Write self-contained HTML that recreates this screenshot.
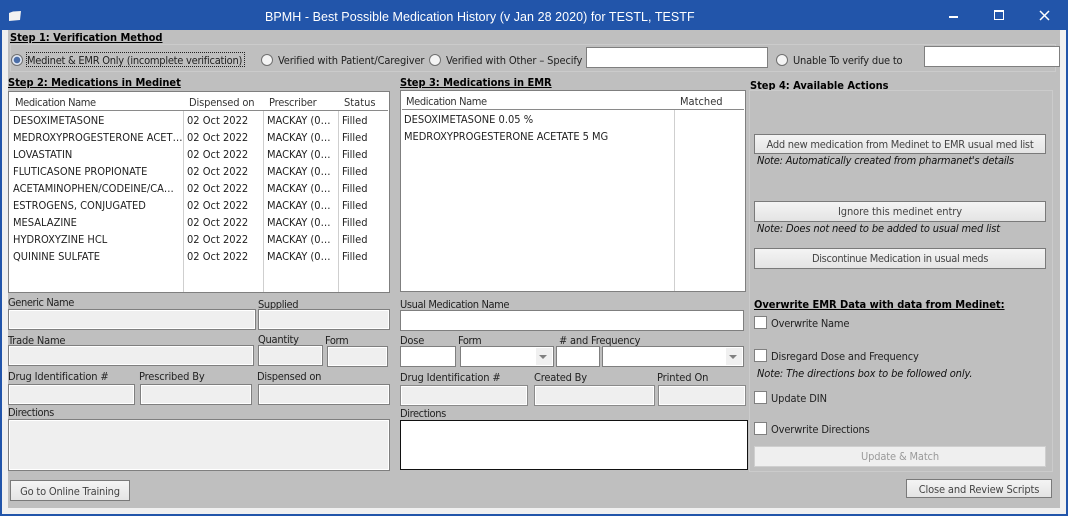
<!DOCTYPE html>
<html><head><meta charset="utf-8"><style>
html,body{margin:0;padding:0}
body{width:1068px;height:516px;overflow:hidden;position:relative;background:#f0f0f0;font:11px/14px "DejaVu Sans Condensed","Liberation Sans",sans-serif;color:#111}
div,span.t{position:absolute;box-sizing:border-box;white-space:nowrap}
.t{font-family:"DejaVu Sans Condensed","Liberation Sans",sans-serif;font-stretch:condensed;font-size:11px;line-height:14px;color:#222;margin-top:1px}
.h{color:#333}
.b{font-weight:bold;color:#000;margin-top:1px;letter-spacing:-.03px}
.u{text-decoration:underline}
.i{font-style:italic;color:#111}
.f{border:1px solid #7f7f7f;background:#efefef;box-shadow:inset 0 0 0 1px #fff}
.w{border:1px solid #7f7f7f;background:#fff}
.d{border:1px solid #8a8a8a;background:#efefef;box-shadow:inset 0 0 0 1px #fff}
.btn{border:1px solid #7a7a7a;background:linear-gradient(#f4f4f4,#e4e4e4);text-align:center;font-family:"DejaVu Sans Condensed","Liberation Sans",sans-serif;font-stretch:condensed;font-size:11px;line-height:20px;color:#444}
.s{background:#cfcfcf}
.c{width:13px;height:13px;border:1px solid #808080;background:#fff;left:754px}
.r{width:12px;height:12px;border:1px solid #707070;border-radius:50%;background:#f4f4f4}
</style></head><body>
<div style="left:0;top:0;width:1068px;height:30px;background:#2255aa"></div>
<div style="left:0;top:0;width:2px;height:516px;background:#2255aa"></div>
<div style="left:1066px;top:0;width:2px;height:516px;background:#2255aa"></div>
<div style="left:0;top:514px;width:1068px;height:2px;background:#2255aa"></div>
<div style="left:8px;top:30px;width:1052px;height:478px;background:#bfbfbf"></div>
<svg style="position:absolute;left:8px;top:10px" width="14" height="12"><path d="M1 3 L5 1.5 L13 1 L12 10 L1 11 Z" fill="#f2f2f2"/></svg>
<span class="t" style="left:265px;top:8px;font-family:'Liberation Sans',sans-serif;font-stretch:normal;font-size:12.5px;line-height:16px;color:#fff;letter-spacing:.05px">BPMH - Best Possible Medication History (v Jan 28 2020) for TESTL, TESTF</span>
<div style="left:949px;top:16px;width:9px;height:2px;background:#fff"></div>
<div style="left:994px;top:10px;width:10px;height:10px;border:1px solid #fff;border-top-width:2px"></div>
<svg style="position:absolute;left:1038px;top:9px" width="13" height="13"><path d="M2 2 L11 11 M11 2 L2 11" stroke="#fff" stroke-width="1.5"/></svg>

<span class="t b u" style="left:10px;top:30px">Step 1: Verification Method</span>
<div style="left:10px;top:44px;width:1046px;height:28px;border:1px solid #cbcbcb"></div>
<div class="r" style="left:11px;top:54px;background:radial-gradient(circle,#4b6ea8 0 3px,#dfe6f2 3.5px)"></div>
<div style="left:26px;top:52px;width:219px;height:15px;border:1px dotted #222"></div>
<span class="t" style="left:27px;top:53px;letter-spacing:-.25px">Medinet &amp; EMR Only (incomplete verification)</span>
<div class="r" style="left:261px;top:54px"></div>
<span class="t" style="left:278px;top:53px;letter-spacing:-.13px">Verified with Patient/Caregiver</span>
<div class="r" style="left:429px;top:54px"></div>
<span class="t" style="left:446px;top:53px;letter-spacing:-.13px">Verified with Other – Specify</span>
<div class="w" style="left:586px;top:47px;width:182px;height:21px"></div>
<div class="r" style="left:776px;top:54px"></div>
<span class="t" style="left:793px;top:53px;letter-spacing:-.2px">Unable To verify due to</span>
<div class="w" style="left:924px;top:46px;width:136px;height:21px"></div>

<span class="t b u" style="left:8px;top:75px">Step 2: Medications in Medinet</span>
<span class="t b u" style="left:400px;top:75px">Step 3: Medications in EMR</span>
<span class="t b" style="left:750px;top:78px">Step 4: Available Actions</span>

<div class="w" style="left:8px;top:91px;width:382px;height:202px"></div>
<div style="left:10px;top:110px;width:378px;height:1px;background:#8a8a8a"></div>
<div class="s" style="left:183px;top:111px;width:1px;height:181px"></div>
<div class="s" style="left:263px;top:111px;width:1px;height:181px"></div>
<div class="s" style="left:338px;top:111px;width:1px;height:181px"></div>
<span class="t h" style="left:15px;top:95px;letter-spacing:-.38px">Medication Name</span>
<span class="t h" style="left:189px;top:95px;letter-spacing:-.15px">Dispensed on</span>
<span class="t h" style="left:269px;top:95px;letter-spacing:-.2px">Prescriber</span>
<span class="t h" style="left:344px;top:95px">Status</span>

<span class="t" style="left:13px;top:113px">DESOXIMETASONE</span>
<span class="t" style="left:13px;top:130px">MEDROXYPROGESTERONE ACET…</span>
<span class="t" style="left:13px;top:147px">LOVASTATIN</span>
<span class="t" style="left:13px;top:164px">FLUTICASONE PROPIONATE</span>
<span class="t" style="left:13px;top:181px">ACETAMINOPHEN/CODEINE/CA…</span>
<span class="t" style="left:13px;top:198px">ESTROGENS, CONJUGATED</span>
<span class="t" style="left:13px;top:215px">MESALAZINE</span>
<span class="t" style="left:13px;top:232px">HYDROXYZINE HCL</span>
<span class="t" style="left:13px;top:249px">QUININE SULFATE</span>

<span class="t" style="left:187px;top:113px">02 Oct 2022</span><span class="t" style="left:267px;top:113px">MACKAY (0…</span><span class="t" style="left:342px;top:113px">Filled</span>
<span class="t" style="left:187px;top:130px">02 Oct 2022</span><span class="t" style="left:267px;top:130px">MACKAY (0…</span><span class="t" style="left:342px;top:130px">Filled</span>
<span class="t" style="left:187px;top:147px">02 Oct 2022</span><span class="t" style="left:267px;top:147px">MACKAY (0…</span><span class="t" style="left:342px;top:147px">Filled</span>
<span class="t" style="left:187px;top:164px">02 Oct 2022</span><span class="t" style="left:267px;top:164px">MACKAY (0…</span><span class="t" style="left:342px;top:164px">Filled</span>
<span class="t" style="left:187px;top:181px">02 Oct 2022</span><span class="t" style="left:267px;top:181px">MACKAY (0…</span><span class="t" style="left:342px;top:181px">Filled</span>
<span class="t" style="left:187px;top:198px">02 Oct 2022</span><span class="t" style="left:267px;top:198px">MACKAY (0…</span><span class="t" style="left:342px;top:198px">Filled</span>
<span class="t" style="left:187px;top:215px">02 Oct 2022</span><span class="t" style="left:267px;top:215px">MACKAY (0…</span><span class="t" style="left:342px;top:215px">Filled</span>
<span class="t" style="left:187px;top:232px">02 Oct 2022</span><span class="t" style="left:267px;top:232px">MACKAY (0…</span><span class="t" style="left:342px;top:232px">Filled</span>
<span class="t" style="left:187px;top:249px">02 Oct 2022</span><span class="t" style="left:267px;top:249px">MACKAY (0…</span><span class="t" style="left:342px;top:249px">Filled</span>

<div class="w" style="left:400px;top:90px;width:346px;height:202px"></div>
<div style="left:402px;top:109px;width:342px;height:1px;background:#8a8a8a"></div>
<div class="s" style="left:674px;top:110px;width:1px;height:181px"></div>
<span class="t h" style="left:406px;top:94px;letter-spacing:-.38px">Medication Name</span>
<span class="t h" style="left:680px;top:94px">Matched</span>
<span class="t" style="left:404px;top:112px">DESOXIMETASONE 0.05 %</span>
<span class="t" style="left:404px;top:129px;letter-spacing:-.05px">MEDROXYPROGESTERONE ACETATE 5 MG</span>

<span class="t" style="left:8px;top:295px;letter-spacing:-.4px">Generic Name</span>
<span class="t" style="left:258px;top:297px;letter-spacing:-.35px">Supplied</span>
<div class="f" style="left:8px;top:309px;width:248px;height:21px"></div>
<div class="f" style="left:258px;top:309px;width:132px;height:21px"></div>
<span class="t" style="left:8px;top:333px;letter-spacing:-.2px">Trade Name</span>
<span class="t" style="left:258px;top:332px;letter-spacing:-.25px">Quantity</span>
<span class="t" style="left:325px;top:333px;letter-spacing:-.4px">Form</span>
<div class="f" style="left:8px;top:345px;width:246px;height:21px"></div>
<div class="f" style="left:258px;top:345px;width:65px;height:21px"></div>
<div class="f" style="left:327px;top:346px;width:61px;height:21px"></div>
<span class="t" style="left:8px;top:369px;letter-spacing:-.15px">Drug Identification #</span>
<span class="t" style="left:139px;top:369px;letter-spacing:-.15px">Prescribed By</span>
<span class="t" style="left:257px;top:369px;letter-spacing:-.25px">Dispensed on</span>
<div class="f" style="left:8px;top:384px;width:127px;height:21px"></div>
<div class="f" style="left:140px;top:384px;width:112px;height:21px"></div>
<div class="f" style="left:258px;top:384px;width:132px;height:21px"></div>
<span class="t" style="left:8px;top:405px;letter-spacing:-.4px">Directions</span>
<div class="f" style="left:8px;top:419px;width:382px;height:52px"></div>
<div class="btn" style="left:10px;top:480px;width:120px;height:21px;line-height:21px;letter-spacing:-.2px">Go to Online Training</div>

<span class="t" style="left:400px;top:297px;letter-spacing:-.38px">Usual Medication Name</span>
<div class="w" style="left:400px;top:310px;width:344px;height:21px"></div>
<span class="t" style="left:400px;top:333px;letter-spacing:-.2px">Dose</span>
<span class="t" style="left:458px;top:333px;letter-spacing:-.4px">Form</span>
<span class="t" style="left:559px;top:333px;letter-spacing:-.2px"># and Frequency</span>
<div class="w" style="left:400px;top:346px;width:56px;height:21px"></div>
<div class="w" style="left:460px;top:346px;width:94px;height:21px"></div>
<div style="left:536px;top:348px;width:16px;height:17px;background:#f0f0f0"></div>
<svg style="position:absolute;left:539px;top:355px" width="10" height="5"><path d="M0 0H8L4 4Z" fill="#808080"/></svg>
<div class="w" style="left:556px;top:346px;width:44px;height:21px"></div>
<div class="w" style="left:602px;top:346px;width:142px;height:21px"></div>
<div style="left:726px;top:348px;width:16px;height:17px;background:#f0f0f0"></div>
<svg style="position:absolute;left:729px;top:355px" width="10" height="5"><path d="M0 0H8L4 4Z" fill="#808080"/></svg>
<span class="t" style="left:400px;top:370px;letter-spacing:-.15px">Drug Identification #</span>
<span class="t" style="left:534px;top:370px;letter-spacing:-.2px">Created By</span>
<span class="t" style="left:657px;top:370px;letter-spacing:-.1px">Printed On</span>
<div class="d" style="left:400px;top:385px;width:128px;height:21px"></div>
<div class="d" style="left:534px;top:385px;width:121px;height:21px"></div>
<div class="d" style="left:658px;top:385px;width:88px;height:21px"></div>
<span class="t" style="left:400px;top:406px;letter-spacing:-.4px">Directions</span>
<div style="left:400px;top:420px;width:348px;height:50px;border:1px solid #111;background:#fff"></div>

<div style="left:749px;top:90px;width:304px;height:382px;border:1px solid #cbcbcb"></div>
<div class="btn" style="left:754px;top:134px;width:292px;height:20px;letter-spacing:-.26px">Add new medication from Medinet to EMR usual med list</div>
<span class="t i" style="left:757px;top:153px;letter-spacing:-.2px">Note: Automatically created from pharmanet's details</span>
<div class="btn" style="left:754px;top:201px;width:292px;height:21px;letter-spacing:-.08px">Ignore this medinet entry</div>
<span class="t i" style="left:757px;top:221px;letter-spacing:-.15px">Note: Does not need to be added to usual med list</span>
<div class="btn" style="left:754px;top:248px;width:292px;height:21px;letter-spacing:-.33px">Discontinue Medication in usual meds</div>
<span class="t b u" style="left:754px;top:297px">Overwrite EMR Data with data from Medinet:</span>
<div class="c" style="top:316px"></div><span class="t" style="left:771px;top:316px;letter-spacing:-.2px">Overwrite Name</span>
<div class="c" style="top:349px"></div><span class="t" style="left:771px;top:349px;letter-spacing:-.15px">Disregard Dose and Frequency</span>
<span class="t i" style="left:757px;top:366px;letter-spacing:-.13px">Note: The directions box to be followed only.</span>
<div class="c" style="top:391px"></div><span class="t" style="left:771px;top:391px;letter-spacing:-.1px">Update DIN</span>
<div class="c" style="top:422px"></div><span class="t" style="left:771px;top:422px;letter-spacing:-.15px">Overwrite Directions</span>
<div class="btn" style="left:754px;top:446px;width:292px;height:21px;background:#efefef;border-color:#cfcfcf;color:#9a9a9a;letter-spacing:-.15px">Update &amp; Match</div>
<div class="btn" style="left:906px;top:479px;width:146px;height:19px;line-height:19px;letter-spacing:-.15px">Close and Review Scripts</div>
</body></html>
